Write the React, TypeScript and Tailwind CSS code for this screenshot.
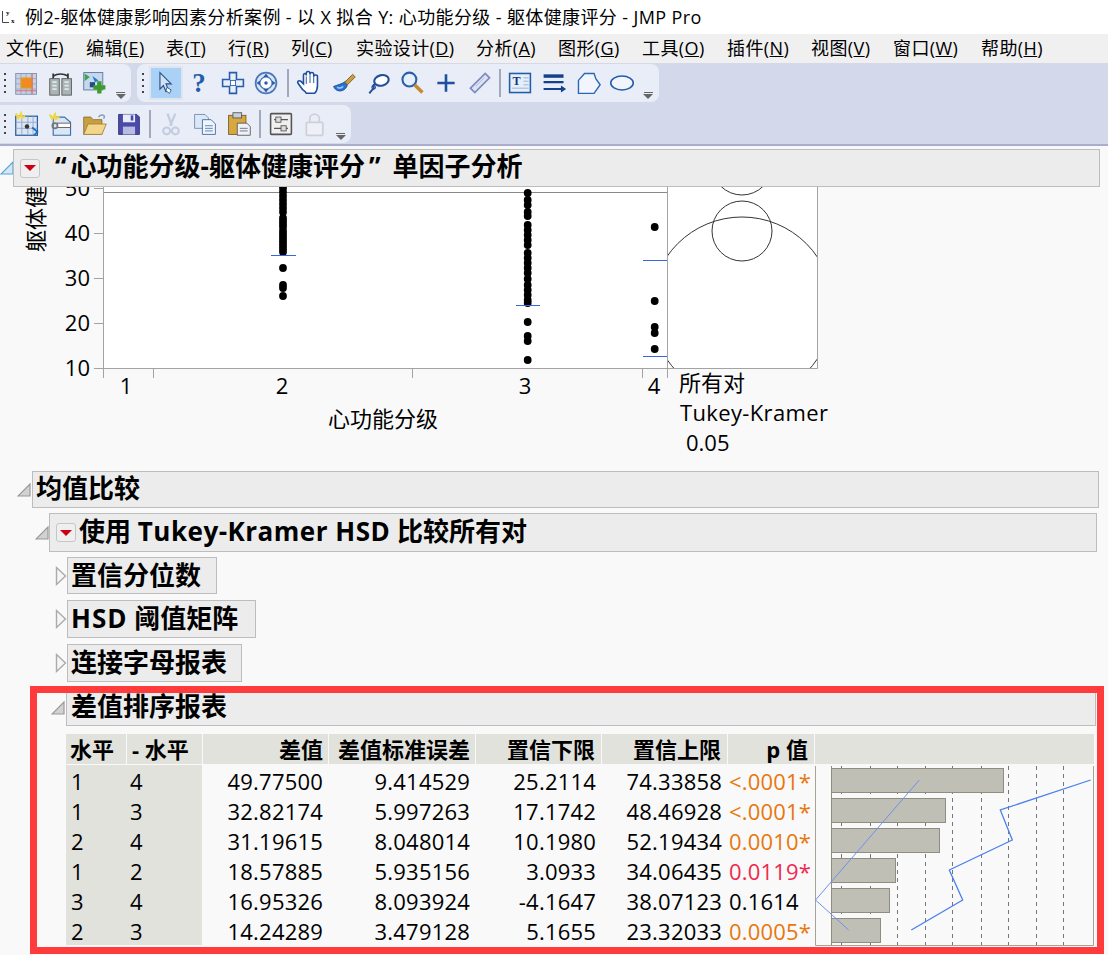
import React from "react";

const Svg = ({ children, s = 26 }: { children: React.ReactNode; s?: number }) => (
  <svg width={s} height={s} viewBox="0 0 30 30" fill="none">{children}</svg>
);

const Icons: Record<string, React.ReactNode> = {
  table: <Svg><rect x="2" y="4" width="24" height="24" fill="#c6d0e6" stroke="#7d8db0"/><path d="M2 10h24M2 16h24M2 22h24M8 4v24M14 4v24M20 4v24" stroke="#95a5c8"/><rect x="8" y="9" width="13" height="12" fill="#f08a24" stroke="#d8b030"/><path d="M2 24h24M21 4v24" stroke="#e06060"/></Svg>,
  cols: <Svg><path d="M6 7c5-3 12-3 17 0" stroke="#333" strokeWidth="2"/><path d="M6 4v6M23 4v6" stroke="#333" strokeWidth="2"/><rect x="2" y="10" width="11" height="19" fill="#a9b4b4" stroke="#555"/><rect x="16" y="10" width="11" height="19" fill="#a9b4b4" stroke="#555"/><path d="M5 14h5M5 18h5M5 22h5M19 14h5M19 18h5M19 22h5" stroke="#dde8ee" strokeWidth="2"/></Svg>,
  addtable: <Svg><rect x="2" y="3" width="22" height="20" fill="#c6d8ee" stroke="#54709c"/><path d="M3 4l6 4-6 5z" fill="#3fa34d"/><path d="M12 7l7 5-4 2z" fill="#1d78c8"/><path d="M9 14h6v6H9z" fill="#254a80"/><path d="M20 13v14M13 20h14" stroke="#3d9a2e" strokeWidth="5"/></Svg>,
  arrow: <Svg><path d="M8 3l13 13-6 0 3 7-3 2-3-7-4 4z" fill="#cfe2f6" stroke="#2c4f86" strokeWidth="1.3"/><path d="M16 20l5 3-2 4-4-3z" fill="#ffffff" stroke="#2c4f86"/></Svg>,
  help: <Svg><text x="15" y="25" textAnchor="middle" fontSize="31" fontWeight="900" fill="#1f5fa8" fontFamily="Liberation Serif, serif">?</text></Svg>,
  cross: <Svg><path d="M11 3h8v8h8v8h-8v8h-8v-8H3v-8h8z" fill="#e6effa" stroke="#2a5ca8" strokeWidth="1.8"/><rect x="12" y="12" width="6" height="6" fill="#fff" stroke="#2a5ca8"/></Svg>,
  target: <Svg><circle cx="15" cy="15" r="12" fill="#dbe6f5" stroke="#4a78b8" strokeWidth="2"/><circle cx="15" cy="15" r="7" fill="#fff" stroke="#4a78b8" strokeWidth="1.4"/><path d="M15 4l3 4h-6zM15 26l3-4h-6zM4 15l4-3v6zM26 15l-4-3v6z" fill="#2a5ca8"/><circle cx="15" cy="15" r="2" fill="#2a5ca8"/></Svg>,
  hand: <Svg s={28}><path d="M7 22l-5-7c-1-2 2-3 3-2l3 3V7c0-3 3-3 3 0V5c0-3 4-3 4 0v1c0-3 4-3 4 0v2c0-2 4-2 4 0v10c0 4-2 7-3 8H11c-1-2-3-3-4-4z" fill="#fff" stroke="#1f4f9c" strokeWidth="1.7"/><path d="M11 8v8M15 6v9M19 7v8" stroke="#1f4f9c"/></Svg>,
  brush: <Svg><path d="M3 19c2 6 10 7 14 2 3-4 2-7 0-8-4 3-9 4-14 6z" fill="#2a72d0" stroke="#1a4a98"/><path d="M16 14l9-9 3 3-9 9z" fill="#c8a040" stroke="#7a5a20"/><path d="M7 20c2 1 5 1 7-1" stroke="#9cc6f4" strokeWidth="2"/></Svg>,
  lasso: <Svg><ellipse cx="19" cy="12" rx="8.5" ry="6" fill="#fff" stroke="#1f4f9c" strokeWidth="2.4" transform="rotate(-15 19 12)"/><path d="M12 16c-3 1-3 3-2 4s-3 4-5 7" stroke="#1f4f9c" strokeWidth="2.2"/><circle cx="10" cy="20" r="2" stroke="#1f4f9c" strokeWidth="1.4"/></Svg>,
  mag: <Svg><circle cx="12" cy="11" r="8" fill="#e4f0fb" stroke="#2c5fa8" strokeWidth="2.4"/><path d="M18 17l9 9" stroke="#c48a30" strokeWidth="4"/></Svg>,
  plus: <Svg><path d="M15 5v20M5 15h20" stroke="#1f4fa0" strokeWidth="3"/></Svg>,
  ruler: <Svg><path d="M4 21L21 4l5 5L9 26z" fill="#dfe4f4" stroke="#7d8cc0" strokeWidth="2"/><path d="M10 19l10-10" stroke="#aab4d8"/></Svg>,
  text: <Svg><rect x="3" y="4" width="24" height="22" fill="#e6eef9" stroke="#1f5fa8" strokeWidth="1.8"/><path d="M19 9h6M19 13h6M19 17h6M6 21h19" stroke="#b4c8e4" strokeWidth="1.6"/><text x="11" y="17" textAnchor="middle" fontSize="14" fontWeight="900" fill="#123c80" fontFamily="Liberation Serif, serif">T</text></Svg>,
  lines: <Svg><path d="M3 7h23" stroke="#14408c" strokeWidth="4"/><path d="M3 14h23M3 22h21" stroke="#14408c" strokeWidth="2.4"/><path d="M23 18l6 4-6 4z" fill="#14408c"/></Svg>,
  poly: <Svg><path d="M4 27V12l7-8h11l2 6 5 7-7 10z" fill="#f2f6fc" stroke="#2a66b8" strokeWidth="1.6"/></Svg>,
  oval: <Svg><ellipse cx="15" cy="15" rx="13" ry="8" fill="#f2f6fc" stroke="#1f5cb0" strokeWidth="1.8"/></Svg>,
  newscript: <Svg><rect x="2" y="6" width="25" height="22" fill="#dbe5f4" stroke="#2a5a98" strokeWidth="1.4"/><path d="M2 13h25M2 20h25M9 6v22M16 6v22M22 6v22" stroke="#8ea6cc"/><circle cx="15" cy="18" r="2.6" fill="#333"/><path d="M2 3l3 5 3-5 1 5 4-2" stroke="#f0d840" strokeWidth="2.5"/><path d="M21 19l6 5-4 4" stroke="#1e70c0" strokeWidth="2"/></Svg>,
  newfile: <Svg><path d="M6 7h13l7 6v15H6z" fill="#d8e6f6" stroke="#3a6ea8" strokeWidth="1.3"/><path d="M2 4l3 5 3-5 1 5 4-2" stroke="#f0d840" strokeWidth="2.5"/><rect x="11" y="14" width="15" height="5" fill="#fff" stroke="#555"/><circle cx="8" cy="17" r="3" stroke="#777" strokeWidth="2"/></Svg>,
  folder: <Svg><path d="M2 7h8l3 3h10v17H2z" fill="#c8a040" stroke="#8a6c30"/><path d="M2 27l5-12h21l-5 12z" fill="#f4d68a" stroke="#a08040"/><path d="M19 7c2-3 5-3 7-1l-1 3" stroke="#8a9cba" strokeWidth="1.6"/></Svg>,
  save: <Svg><path d="M3 4h21l3 3v20H3z" fill="#4a4aa8" stroke="#30307c"/><rect x="8" y="4" width="14" height="9" fill="#e8ecf8"/><rect x="8" y="18" width="14" height="9" fill="#b8bce0"/><rect x="17" y="5" width="3" height="6" fill="#4a4aa8"/></Svg>,
  scissors: <Svg><path d="M11 3l5 14M20 3l-6 14" stroke="#c4cce0" strokeWidth="2.6"/><circle cx="10" cy="23" r="4" stroke="#c4cce0" strokeWidth="2.4"/><circle cx="20" cy="23" r="4" stroke="#c4cce0" strokeWidth="2.4"/></Svg>,
  copy: <Svg><path d="M3 4h12l4 4v12H3z" fill="#dde8f6" stroke="#6a8ab4"/><path d="M12 10h10l5 5v12H12z" fill="#f0f5fb" stroke="#3a66a0"/><path d="M15 17h9M15 20h9M15 23h9" stroke="#4a76b0"/></Svg>,
  paste: <Svg><rect x="3" y="5" width="20" height="22" fill="#d8a840" stroke="#7a5a20"/><rect x="8" y="2" width="10" height="6" fill="#c8d0dc" stroke="#555"/><path d="M13 14h11l4 4v10H13z" fill="#eef2f8" stroke="#555"/><path d="M16 20h9M16 23h9" stroke="#667"/></Svg>,
  settings: <Svg><rect x="3" y="3" width="24" height="24" rx="1" fill="#f0f0f0" stroke="#555" strokeWidth="1.8"/><path d="M7 10h16M7 20h16" stroke="#555" strokeWidth="1.6"/><rect x="9" y="7" width="6" height="6" fill="#ddd" stroke="#555"/><rect x="15" y="17" width="6" height="6" fill="#ddd" stroke="#555"/></Svg>,
  lock: <Svg><rect x="5" y="13" width="19" height="15" rx="1" fill="#eef0f8" stroke="#cdd0da" strokeWidth="2"/><path d="M9 13V9c0-7 11-7 11 0v4" stroke="#cdd0da" strokeWidth="2"/></Svg>,
};

const Grip = ({ w = "w-[10px]", pl = "pl-1" }: { w?: string; pl?: string }) => (
  <div className={`${w} ${pl} flex flex-col gap-1 shrink-0`}>
    {[0, 1, 2, 3].map((i) => <span key={i} className="w-[2px] h-[2px] bg-[#444]" />)}
  </div>
);
const Chev = ({ w }: { w: string }) => (
  <div className={`${w} h-full flex flex-col items-center justify-end pb-[3px] shrink-0 pr-[2px]`}>
    <span className="w-[9px] h-px bg-[#666] mb-px" />
    <svg width="10" height="5" viewBox="0 0 10 5"><path d="M0 0h10L5 5z" fill="#666" /></svg>
  </div>
);
const Sep = ({ w }: { w: string }) => (
  <div className={`${w} flex justify-center shrink-0`}><span className="w-[2px] h-[28px] bg-[#a3a8bc]" /></div>
);
const Slot = ({ n, w = "w-[34px]", active }: { n: string; w?: string; active?: boolean }) => (
  <div className={`${w} h-[34px] flex items-center justify-center shrink-0 ${active ? "bg-[#a9d2f6] border-2 border-[#dfe4ee]" : ""}`}>
    {Icons[n]}
  </div>
);

const menu: [string, string, string][] = [
  ["文件", "F", "w-[80px]"], ["编辑", "E", "w-[80px]"], ["表", "T", "w-[62px]"], ["行", "R", "w-[63px]"],
  ["列", "C", "w-[65px]"], ["实验设计", "D", "w-[120px]"], ["分析", "A", "w-[82px]"], ["图形", "G", "w-[84px]"],
  ["工具", "O", "w-[85px]"], ["插件", "N", "w-[84px]"], ["视图", "V", "w-[82px]"], ["窗口", "W", "w-[88px]"], ["帮助", "H", "w-[80px]"],
];

const OpenTri = ({ blue }: { blue?: boolean }) => (
  <svg width="14" height="14" viewBox="0 0 14 14" className="shrink-0">
    <path d="M13 1v12H1z" fill={blue ? "#d2e8f8" : "#d2d2d2"} stroke={blue ? "#56a6d8" : "#9a9a9a"} strokeWidth="1.2" />
  </svg>
);
const ClosedTri = () => (
  <svg width="12" height="20" viewBox="0 0 12 20" className="shrink-0">
    <path d="M1.5 1.5L10.5 10l-9 8.5z" fill="#f6f6f6" stroke="#ababab" strokeWidth="1.4" />
  </svg>
);
const RedBtn = () => (
  <div className="w-[20px] h-[19px] rounded-[3px] bg-[#efefef] border border-[#c6c6c6] flex items-center justify-center shrink-0">
    <svg width="12" height="6" viewBox="0 0 12 6"><path d="M0 0h12L6 6z" fill="#cc0010" /></svg>
  </div>
);

const H = "bg-[#ececec] border border-[#bdbdbd] flex items-center font-bold text-[26px] text-black whitespace-nowrap";

const g2 = [188, 192, 196, 200, 204, 208, 212, 218, 221, 224, 227, 231, 234, 237, 240, 243, 246, 249, 252];
const g2b = [268, 285, 288, 296];
const g3 = [193, 200, 205, 212, 216, 225, 230, 235, 240, 245, 253, 258, 263, 268, 273, 279, 285, 290, 295, 300, 303, 322, 336, 341, 360];
const g4 = [227, 301, 327, 333, 349];
const ft = "'Open Sans','Noto Sans CJK SC',sans-serif";

const Plot = () => (
  <svg width="1108" height="283" viewBox="0 187 1108 283" className="block" fontFamily={ft}>
    <rect x="103" y="187" width="714" height="181" fill="#fff" />
    <path d="M103 192.5H667" stroke="#888" fill="none" />
    <path d="M94 368.5H817.5V187M103.5 187V378M667.5 187V378M153.5 368V378M412.5 368V378M642.5 368V378M94 323.5H103M94 278.5H103M94 233.5H103M94 188.5H103" stroke="#a3a3a3" fill="none" />
    {[...g2, ...g2b].map((y) => <circle key={"a" + y} cx="283" cy={y} r="3.9" fill="#000" />)}
    {g3.map((y) => <circle key={"b" + y} cx="527.7" cy={y} r="3.9" fill="#000" />)}
    {g4.map((y) => <circle key={"c" + y} cx="654.7" cy={y} r="3.9" fill="#000" />)}
    <path d="M271 255.5H296M516 305.5H540M643 260.5H667M643 356.5H667" stroke="#3368e0" fill="none" />
    <g clipPath="url(#cc)" fill="none" stroke="#333">
      <circle cx="742" cy="165" r="30" />
      <circle cx="742" cy="231" r="30" />
      <circle cx="742" cy="308" r="91" />
    </g>
    <defs><clipPath id="cc"><rect x="668" y="187" width="149" height="181" /></clipPath></defs>
    <g fontSize="22" fill="#000">
      <text x="90" y="196" textAnchor="end">50</text>
      <text x="90" y="241" textAnchor="end">40</text>
      <text x="90" y="286" textAnchor="end">30</text>
      <text x="90" y="331" textAnchor="end">20</text>
      <text x="90" y="376" textAnchor="end">10</text>
      <text x="126" y="394" textAnchor="middle">1</text>
      <text x="282" y="394" textAnchor="middle">2</text>
      <text x="525" y="394" textAnchor="middle">3</text>
      <text x="654" y="394" textAnchor="middle">4</text>
      <text x="328" y="427">心功能分级</text>
      <text x="679" y="391">所有对</text>
      <text x="680" y="421" letterSpacing="0.35">Tukey-Kramer</text>
      <text x="686" y="451">0.05</text>
      <text transform="translate(44 252) rotate(-90)">躯体健康评分</text>
    </g>
  </svg>
);

const headers: [string, string][] = [
  ["水平", "text-left pl-[4px]"], ["- 水平", "text-left pl-[5px]"], ["差值", "text-right pr-[5px]"], ["差值标准误差", "text-right pr-[5px]"],
  ["置信下限", "text-right pr-[6px]"], ["置信上限", "text-right pr-[6px]"], ["p 值", "text-right pr-[6px]"], [" ", ""],
];
const rows: [string, string, string, string, string, string, string, string][] = [
  ["1", "4", "49.77500", "9.414529", "25.2114", "74.33858", "<.0001*", "text-[#e8770c]"],
  ["1", "3", "32.82174", "5.997263", "17.1742", "48.46928", "<.0001*", "text-[#e8770c]"],
  ["2", "4", "31.19615", "8.048014", "10.1980", "52.19434", "0.0010*", "text-[#e8770c]"],
  ["1", "2", "18.57885", "5.935156", "3.0933", "34.06435", "0.0119*", "text-[#f0284f]"],
  ["3", "4", "16.95326", "8.093924", "-4.1647", "38.07123", "0.1614", "text-black"],
  ["2", "3", "14.24289", "3.479128", "5.1655", "23.32033", "0.0005*", "text-[#e8770c]"],
];
const bars = [1003.5, 945.5, 939.5, 895.5, 889.5, 880.5];

const MiniChart = () => (
  <svg width="279" height="181" viewBox="815 765 279 181" className="block shrink-0">
    {[841.5, 870.5, 897.5, 925.5, 952.5, 981.5, 1008.5, 1036.5, 1063.5].map((x) => (
      <path key={x} d={`M${x} 766V946`} stroke="#777" strokeDasharray="4 4" />
    ))}
    {bars.map((x, i) => (
      <rect key={i} x="831.5" y={768.5 + i * 30} width={x - 831.5} height="24" fill="#c0bfb6" stroke="#8e8e80" />
    ))}
    <path d="M815.5 766V945.5H1093.5V766" stroke="#a3a398" fill="none" />
    <path d="M831.5 766V945" stroke="#8e8e80" />
    <path d="M919.3 780L815.5 900L848.7 930" stroke="#6a92ea" fill="none" />
    <path d="M1090.7 780L1000.3 810L1012.3 840L949.3 870L962.7 900L911.3 930" stroke="#4a80ee" strokeWidth="1.3" fill="none" />
  </svg>
);

export default function App() {
  return (
    <div className="w-[1108px] h-[955px] overflow-hidden bg-[#f9f9f9] text-black font-['Open_Sans','Noto_Sans_CJK_SC',sans-serif]">
      {/* title bar */}
      <div className="h-[34px] bg-white flex items-center pl-[1px] gap-[8px] text-[18px] tracking-[0.38px] whitespace-nowrap">
        <svg width="16" height="16" viewBox="0 0 16 16" className="shrink-0">
          <path d="M1.5 2v11.5H8" stroke="#445" fill="none" />
          <text x="5" y="6" fontSize="7" fontWeight="700" fontFamily="Liberation Serif, serif">y</text>
          <text x="10" y="14" fontSize="7" fontWeight="700" fontFamily="Liberation Serif, serif">x</text>
        </svg>
        <span>例2-躯体健康影响因素分析案例 - 以 X 拟合 Y: 心功能分级 - 躯体健康评分 - JMP Pro</span>
      </div>
      {/* menu */}
      <div className="h-[29px] bg-[#f0f0f0] flex items-center pl-[6px] text-[18px] tracking-[0.4px] whitespace-nowrap">
        {menu.map(([t, k, w]) => (
          <div key={t} className={`${w} shrink-0`}>{t}(<span className="underline">{k}</span>)</div>
        ))}
      </div>
      {/* toolbars */}
      <div className="h-[83px] bg-[#d3d9eb] border-b-2 border-[#a8aecb] pt-px flex flex-col gap-[3px]">
        <div className="flex h-[38px] gap-[6px]">
          <div className="w-[131px] bg-[#e9edf7] rounded-r-lg flex items-center">
            <Grip />
            <Slot n="table" /><Slot n="cols" /><Slot n="addtable" />
            <Chev w="w-[19px]" />
          </div>
          <div className="w-[522px] bg-[#e9edf7] rounded-lg flex items-center">
            <Grip w="w-[12px]" pl="pl-[5px]" />
            <Slot n="arrow" w="w-[33.5px]" active /><Slot n="help" w="w-[33.5px]" /><Slot n="cross" w="w-[33.5px]" /><Slot n="target" w="w-[33.5px]" />
            <Sep w="w-[10px]" />
            <Slot n="hand" /><Slot n="brush" /><Slot n="lasso" /><Slot n="mag" /><Slot n="plus" /><Slot n="ruler" />
            <Sep w="w-[6px]" />
            <Slot n="text" /><Slot n="lines" /><Slot n="poly" /><Slot n="oval" />
            <Chev w="w-[20px]" />
          </div>
        </div>
        <div className="w-[351px] h-[38px] bg-[#e9edf7] rounded-r-lg flex items-center">
          <Grip />
          <Slot n="newscript" /><Slot n="newfile" /><Slot n="folder" /><Slot n="save" />
          <Sep w="w-[8px]" />
          <Slot n="scissors" /><Slot n="copy" /><Slot n="paste" />
          <Sep w="w-[8px]" />
          <Slot n="settings" /><Slot n="lock" />
          <Chev w="w-[19px]" />
        </div>
      </div>

      {/* report */}
      <div className="mt-[3px] flex items-center">
        <div className="w-[13px] shrink-0"><OpenTri blue /></div>
        <div className={`${H} w-[1087px] h-[38px] pl-[6px] gap-[15px]`}>
          <RedBtn />
          <span className="pb-[4px]">“<span className="ml-[4px]">心功能分级-躯体健康评分</span><span className="ml-[4px] mr-[12px]">”</span>单因子分析</span>
        </div>
      </div>
      <Plot />
      <div className="mt-px pl-[17px] flex items-center">
        <div className="w-[15px] shrink-0"><OpenTri /></div>
        <div className={`${H} w-[1067px] h-[37px] pl-[3px] pb-[2px]`}>均值比较</div>
      </div>
      <div className="mt-[5px] pl-[35px] flex items-center">
        <div className="w-[14px] shrink-0"><OpenTri /></div>
        <div className={`${H} w-[1048px] h-[39px] pl-[6px] gap-[3px]`}>
          <RedBtn />
          <span className="pb-[2px]">使用 <span className="tracking-[0.5px]">Tukey-Kramer HSD</span> 比较所有对</span>
        </div>
      </div>
      <div className="mt-[5px] pl-[55px] flex items-center">
        <div className="w-[12px] shrink-0"><ClosedTri /></div>
        <div className={`${H} w-[150px] h-[37px] pl-[3px]`}>置信分位数</div>
      </div>
      <div className="mt-[6px] pl-[55px] flex items-center">
        <div className="w-[12px] shrink-0"><ClosedTri /></div>
        <div className={`${H} w-[189px] h-[38px] pl-[3px] pb-[2px]`}><span className="tracking-[1px]">HSD</span>&nbsp;阈值矩阵</div>
      </div>
      <div className="mt-[6px] pl-[55px] flex items-center">
        <div className="w-[12px] shrink-0"><ClosedTri /></div>
        <div className={`${H} w-[175px] h-[38px] pl-[3px] pb-[1px]`}>连接字母报表</div>
      </div>

      {/* highlighted report */}
      <div className="mt-[4px] ml-[30px] w-[1074px] h-[268px] border-[7px] border-[#ff3b3b] pl-[29px]">
        <div className="flex items-center -ml-[15px]">
          <div className="w-[15px] shrink-0 -mt-[3px]"><OpenTri /></div>
          <div className={`${H} w-[1030px] h-[33px] pl-[4px] border-t-0 pb-[6px]`}>差值排序报表</div>
        </div>
        <div className="mt-[8px] grid grid-cols-[61px_76px_126px_147px_126px_126px_87px_279px] text-[22px] leading-[30px]">
          {headers.map(([t, c], i) => (
            <div key={i} className={`h-[30px] bg-[#e2e2dd] font-bold whitespace-nowrap ${i < 7 ? "border-r border-[#f9f9f9]" : ""} ${c}`}>{t}</div>
          ))}
        </div>
        <div className="mt-px flex">
          <div className="grid grid-cols-[61px_75px_127px_147px_126px_126px_87px] auto-rows-[30px] text-[22px] leading-[33px] tracking-[0.2px] whitespace-nowrap">
            {rows.map((r, i) => (
              <React.Fragment key={i}>
                <div className="bg-[#e2e2dd] pl-[5px]">{r[0]}</div>
                <div className="bg-[#e2e2dd] pl-[3px]">{r[1]}</div>
                <div className="text-right pr-[6px]">{r[2]}</div>
                <div className="text-right pr-[6px]">{r[3]}</div>
                <div className="text-right pr-[6px]">{r[4]}</div>
                <div className="text-right pr-[6px]">{r[5]}</div>
                <div className={`${r[7]} pl-px`}>{r[6]}</div>
              </React.Fragment>
            ))}
          </div>
          <MiniChart />
        </div>
      </div>
    </div>
  );
}
